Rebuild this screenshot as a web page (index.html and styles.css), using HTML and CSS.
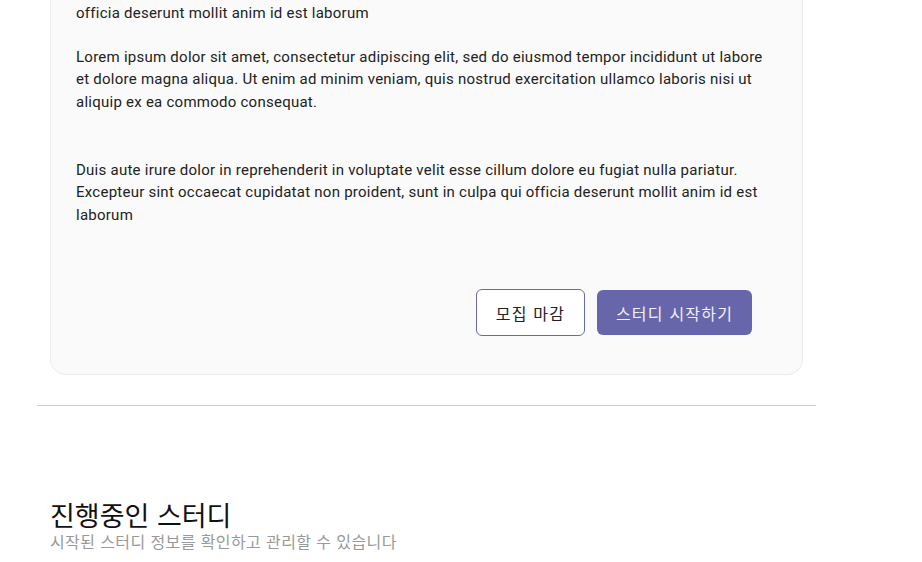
FILE: index.html
```html
<!DOCTYPE html>
<html lang="ko">
<head>
<meta charset="utf-8">
<title>스터디</title>
<link rel="stylesheet" href="styles.css">
</head>
<body>
<main class="main">
  <article class="card">
    <p class="para p1">Excepteur sint occaecat cupidatat non proident, sunt in culpa qui<br>officia deserunt mollit anim id est laborum</p>
    <p class="para p2">Lorem ipsum dolor sit amet, consectetur adipiscing elit, sed do eiusmod tempor incididunt ut labore et dolore magna aliqua. Ut enim ad minim veniam, quis nostrud exercitation ullamco laboris nisi ut aliquip ex ea commodo consequat.</p>
    <p class="para p3">Duis aute irure dolor in reprehenderit in voluptate velit esse cillum dolore eu fugiat nulla pariatur. Excepteur sint occaecat cupidatat non proident, sunt in culpa qui officia deserunt mollit anim id est laborum</p>
    <div class="actions">
      <button class="btn btn-outline">모집 마감</button>
      <button class="btn btn-primary">스터디 시작하기</button>
    </div>
  </article>
  <hr class="divider">
  <section class="section-head">
    <h2 class="section-title">진행중인 스터디</h2>
    <p class="section-sub">시작된 스터디 정보를 확인하고 관리할 수 있습니다</p>
  </section>
</main>
</body>
</html>
```

FILE: styles.css
```css
html, body {
  margin: 0;
  padding: 0;
  background: #ffffff;
}
body {
  font-family: "Noto Sans CJK KR", "Noto Sans", sans-serif;
  color: #222;
  overflow: hidden;
}
.main {
  width: 779px;
  margin-left: 37px;
  margin-top: -47px;
}
.card {
  margin: 0 13px;
  background: #fafafa;
  border: 1px solid #ececec;
  border-top: none;
  border-radius: 0 0 16px 16px;
  padding: 26px 26px 38px 25px;
}
.para {
  margin: 0;
  font-family: Roboto, "Noto Sans CJK KR", sans-serif;
  font-size: 15px;
  letter-spacing: 0.25px;
  line-height: 22.5px;
  color: #222;
}
.p1 { margin-bottom: 21.5px; }
.p2 { margin-bottom: 45.5px; }
.actions {
  display: flex;
  justify-content: flex-end;
  align-items: center;
  gap: 12px;
  margin-top: 63px;
  padding-right: 24px;
}
.btn {
  font-family: "Noto Sans CJK KR", sans-serif;
  font-size: 16px;
  letter-spacing: 1.2px;
  border-radius: 6px;
  cursor: pointer;
  padding: 0;
}
.btn-outline {
  width: 109px;
  height: 47px;
  background: #ffffff;
  border: 1px solid #6b69ad;
  color: #222;
}
.btn-primary {
  width: 155px;
  height: 45px;
  background: #6866aa;
  border: none;
  color: #f0f0f5;
}
.divider {
  margin: 30px 0 0 0;
  border: none;
  border-top: 1px solid #cccccc;
  height: 0;
}
.section-head {
  padding: 0 13px;
  margin-top: 94px;
}
.section-title {
  margin: 0;
  font-size: 27px;
  font-weight: 400;
  line-height: 30px;
  color: #111;
}
.section-sub {
  margin: 0;
  font-size: 16px;
  letter-spacing: 0.4px;
  line-height: 22px;
  color: #999;
}
```
